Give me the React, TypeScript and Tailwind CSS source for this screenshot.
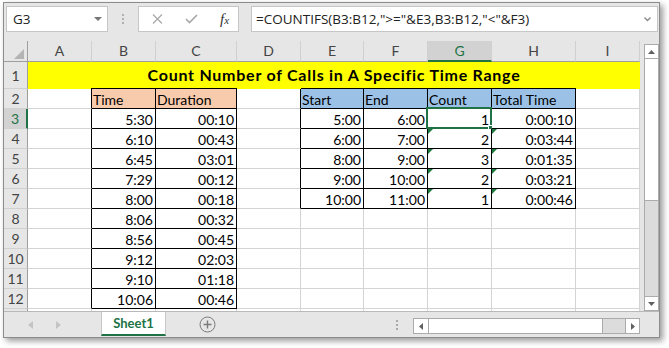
import React from "react";

const COLS = ["A", "B", "C", "D", "E", "F", "G", "H", "I"] as const;
type Col = (typeof COLS)[number];

const times = ["5:30", "6:10", "6:45", "7:29", "8:00", "8:06", "8:56", "9:12", "9:10", "10:06"];
const durations = ["00:10", "00:43", "03:01", "00:12", "00:18", "00:32", "00:45", "02:03", "01:18", "00:46"];
const ranges = [
  { E: "5:00", F: "6:00", G: "1", H: "0:00:10" },
  { E: "6:00", F: "7:00", G: "2", H: "0:03:44" },
  { E: "8:00", F: "9:00", G: "3", H: "0:01:35" },
  { E: "9:00", F: "10:00", G: "2", H: "0:03:21" },
  { E: "10:00", F: "11:00", G: "1", H: "0:00:46" },
];
const heads: Partial<Record<Col, string>> = {
  B: "Time",
  C: "Duration",
  E: "Start",
  F: "End",
  G: "Count",
  H: "Total Time",
};

const isLeft = (c: Col) => c === "B" || c === "C";
const isRight = (c: Col) => c === "E" || c === "F" || c === "G" || c === "H";
const inTable = (r: number, c: Col) =>
  (isLeft(c) && r >= 2 && r <= 12) || (isRight(c) && r >= 2 && r <= 7);

function valueAt(r: number, c: Col): string | undefined {
  if (r === 2) return heads[c];
  if (r >= 3 && r <= 12) {
    if (c === "B") return times[r - 3];
    if (c === "C") return durations[r - 3];
  }
  if (r >= 3 && r <= 7 && isRight(c)) {
    return ranges[r - 3][c as "E" | "F" | "G" | "H"];
  }
  return undefined;
}

// petit triangle vert (erreur "nombre stocké en texte")
function Flag() {
  return (
    <span className="absolute left-0 top-0 w-0 h-0 border-t-[5px] border-r-[5px] border-t-[#1e7b3e] border-r-transparent" />
  );
}

function Cell({ r, c }: { r: number; c: Col }) {
  const v = valueAt(r, c);
  const rightBlack = inTable(r, c) || (c === "A" && r >= 2 && r <= 12) || (c === "D" && r >= 2 && r <= 7);
  const bottomBlack = inTable(r, c);
  let bg = "bg-white";
  if (r === 2 && isLeft(c)) bg = "bg-[#f8cbad]";
  if (r === 2 && isRight(c)) bg = "bg-[#9bc2e6]";
  const align = r === 2 ? "text-left pl-[1px]" : "text-right pr-[2px]";
  const flagged = (c === "G" || c === "H") && r >= 4 && r <= 7;
  return (
    <div
      className={`relative border-r border-b text-[14px] leading-[21px] text-black whitespace-nowrap ${bg} ${align} ${
        rightBlack ? "border-r-black" : "border-r-[#d4d4d4]"
      } ${bottomBlack ? "border-b-black" : "border-b-[#d4d4d4]"}`}
    >
      {flagged && <Flag />}
      {v}
      {r === 3 && c === "G" && (
        <>
          <span className="absolute -left-[2px] -top-[2px] -right-[1px] -bottom-[1px] border-2 border-[#217346]" />
          <span className="absolute -right-[3px] -bottom-[3px] w-[5px] h-[5px] bg-[#217346] outline outline-1 outline-white" />
        </>
      )}
    </div>
  );
}

function RowHead({ r }: { r: number }) {
  const sel = r === 3;
  return (
    <div
      className={`border-b border-b-[#d0d0d0] text-center text-[14px] leading-[20px] ${
        sel
          ? "bg-[#d2d2d2] text-[#217346] border-r-2 border-r-[#217346]"
          : "bg-[#e6e6e6] text-[#444] border-r border-r-[#9e9e9e]"
      } ${r === 1 ? "leading-[27px]" : ""}`}
    >
      {r}
    </div>
  );
}

function Grid() {
  const rows = [2, 3, 4, 5, 6, 7, 8, 9, 10, 11, 12];
  return (
    <div className="w-[636px] grid grid-cols-[24px_64px_64px_81px_64px_63px_64px_64px_84px_64px] grid-rows-[21px_27px_repeat(11,20px)_2px] bg-white">
      {/* coin + en-têtes de colonnes */}
      <div className="bg-[#e6e6e6] border-r border-b border-[#9e9e9e] flex items-end justify-end pr-[3px] pb-[2px]">
        <svg width="10" height="10" viewBox="0 0 10 10">
          <path d="M10 0V10H0Z" fill="#b4b4b4" />
        </svg>
      </div>
      {COLS.map((c) => (
        <div
          key={c}
          className={`border-r border-r-[#d0d0d0] text-center text-[14px] leading-[20px] ${
            c === "G"
              ? "bg-[#d2d2d2] text-[#217346] border-b-2 border-b-[#217346]"
              : "bg-[#e6e6e6] text-[#444] border-b border-b-[#9e9e9e]"
          }`}
        >
          {c}
        </div>
      ))}

      {/* ligne 1 : titre fusionné A1:I1 */}
      <RowHead r={1} />
      <div className="col-span-9 flex flex-col">
        <div className="h-[26px] bg-[#ffff00] text-center font-bold text-[16px] tracking-[0.75px] leading-[26px] text-black">
          Count Number of Calls in A Specific Time Range
        </div>
        <div className="h-[1px] flex">
          <div className="w-[63px] bg-[#ffff00]" />
          <div className="w-[146px] bg-black" />
          <div className="w-[64px] bg-[#ffff00]" />
          <div className="w-[275px] bg-black" />
          <div className="flex-1 bg-[#ffff00]" />
        </div>
      </div>

      {rows.map((r) => (
        <React.Fragment key={r}>
          <RowHead r={r} />
          {COLS.map((c) => (
            <Cell key={c} r={r} c={c} />
          ))}
        </React.Fragment>
      ))}

      {/* ligne 13, à peine visible */}
      <div className="bg-[#e6e6e6] border-r border-r-[#9e9e9e]" />
      {COLS.map((c) => (
        <div key={c} className="border-r border-r-[#d4d4d4]" />
      ))}
    </div>
  );
}

function VScroll() {
  return (
    <div className="w-[19px] pt-[3px] pl-[4px] flex flex-col">
      <div className="w-[15px] flex-1 border border-[#ababab] bg-[#dcdcdc] flex flex-col">
        <div className="h-[14px] bg-white border-b border-[#ababab] flex items-center justify-center">
          <svg width="7" height="4" viewBox="0 0 7 4">
            <path d="M0 4L3.5 0L7 4Z" fill="#606060" />
          </svg>
        </div>
        <div className="h-[142px] bg-white border-b border-[#ababab]" />
        <div className="flex-1" />
        <div className="h-[14px] bg-white border-t border-[#ababab] flex items-center justify-center">
          <svg width="7" height="4" viewBox="0 0 7 4">
            <path d="M0 0L3.5 4L7 0Z" fill="#606060" />
          </svg>
        </div>
      </div>
    </div>
  );
}

function FormulaBar() {
  return (
    <div className="h-[38px] flex items-start pt-[3px] font-['Open_Sans',sans-serif]">
      <div className="ml-[2px] w-[102px] h-[26px] bg-white border border-[#c6c6c6] flex items-center pl-[6px] pr-[5px] text-[13.5px] text-[#222]">
        <span className="flex-1">G3</span>
        <svg width="8" height="4" viewBox="0 0 8 4">
          <path d="M0 0H8L4 4Z" fill="#777" />
        </svg>
      </div>
      <div className="w-[30px] h-[26px] flex flex-col items-center justify-center gap-[2px]">
        <span className="w-[2px] h-[2px] bg-[#b0b0b0]" />
        <span className="w-[2px] h-[2px] bg-[#b0b0b0]" />
        <span className="w-[2px] h-[2px] bg-[#b0b0b0]" />
      </div>
      <div className="w-[101px] h-[26px] bg-white border border-[#c6c6c6] flex items-center">
        <svg className="ml-[13px]" width="11" height="10" viewBox="0 0 11 10">
          <path d="M1 0.5L10 9.5M10 0.5L1 9.5" stroke="#a8a8a8" strokeWidth="1.2" />
        </svg>
        <svg className="ml-[22px]" width="13" height="10" viewBox="0 0 13 10">
          <path d="M1 5L4.5 8.5L12 1" stroke="#a8a8a8" strokeWidth="1.6" fill="none" />
        </svg>
        <span className="ml-[22px] font-['Liberation_Serif',serif] italic text-[15px] text-[#333] leading-none">
          f<span className="text-[11px]">x</span>
        </span>
      </div>
      <div className="ml-[12px] w-[407px] h-[26px] bg-white border border-[#c6c6c6] flex items-center pl-[4px] pr-[6px] text-[13.5px] text-[#222]">
        <span className="flex-1 whitespace-nowrap">=COUNTIFS(B3:B12,"&gt;="&amp;E3,B3:B12,"&lt;"&amp;F3)</span>
        <svg width="7" height="5" viewBox="0 0 7 5">
          <path d="M0.5 0.5L3.5 3.5L6.5 0.5" stroke="#8a8a8a" strokeWidth="1.4" fill="none" />
        </svg>
      </div>
    </div>
  );
}

function TabBar() {
  return (
    <div className="h-[26px] border-t border-[#b9b9b9] flex items-center">
      <div className="w-[97px] h-full flex items-center">
        <svg className="ml-[24px]" width="5" height="8" viewBox="0 0 5 8">
          <path d="M5 0V8L0 4Z" fill="#c4c4c4" />
        </svg>
        <svg className="ml-[23px]" width="5" height="8" viewBox="0 0 5 8">
          <path d="M0 0V8L5 4Z" fill="#c4c4c4" />
        </svg>
      </div>
      <div className="self-start w-[65px] h-[24px] bg-white border-x border-[#c6c6c6] border-b-2 border-b-[#217346] text-center font-bold text-[13px] leading-[23px] text-[#217346]">
        Sheet1
      </div>
      <svg className="ml-[33px]" width="17" height="17" viewBox="0 0 17 17">
        <circle cx="8.5" cy="8.5" r="7.5" stroke="#7a7a7a" strokeWidth="1" fill="none" />
        <path d="M8.5 4.5V12.5M4.5 8.5H12.5" stroke="#7a7a7a" strokeWidth="1.4" />
      </svg>
      <div className="ml-[180px] flex flex-col gap-[2px]">
        <span className="w-[2px] h-[2px] bg-[#a8a8a8]" />
        <span className="w-[2px] h-[2px] bg-[#a8a8a8]" />
        <span className="w-[2px] h-[2px] bg-[#a8a8a8]" />
      </div>
      <div className="self-start mt-[6px] ml-[15px] w-[227px] h-[16px] border border-[#ababab] bg-[#dcdcdc] flex">
        <div className="w-[15px] bg-white border-r border-[#ababab] flex items-center justify-center">
          <svg width="4" height="7" viewBox="0 0 4 7">
            <path d="M4 0V7L0 3.5Z" fill="#606060" />
          </svg>
        </div>
        <div className="w-[174px] bg-white border-r border-[#ababab]" />
        <div className="flex-1" />
        <div className="w-[14px] bg-white border-l border-[#ababab] flex items-center justify-center">
          <svg width="4" height="7" viewBox="0 0 4 7">
            <path d="M0 0V7L4 3.5Z" fill="#606060" />
          </svg>
        </div>
      </div>
    </div>
  );
}

export default function App() {
  return (
    <div className="w-[669px] h-[348px] bg-white pl-[3px] pt-[2px] font-['Lato',sans-serif]">
      <div className="w-[657px] h-[336px] border border-[#8c8c8c] bg-[#e6e6e6] shadow-[3px_3px_6px_rgba(0,0,0,0.4)] flex flex-col overflow-hidden">
        <FormulaBar />
        <div className="flex h-[270px]">
          <Grid />
          <VScroll />
        </div>
        <TabBar />
      </div>
    </div>
  );
}
